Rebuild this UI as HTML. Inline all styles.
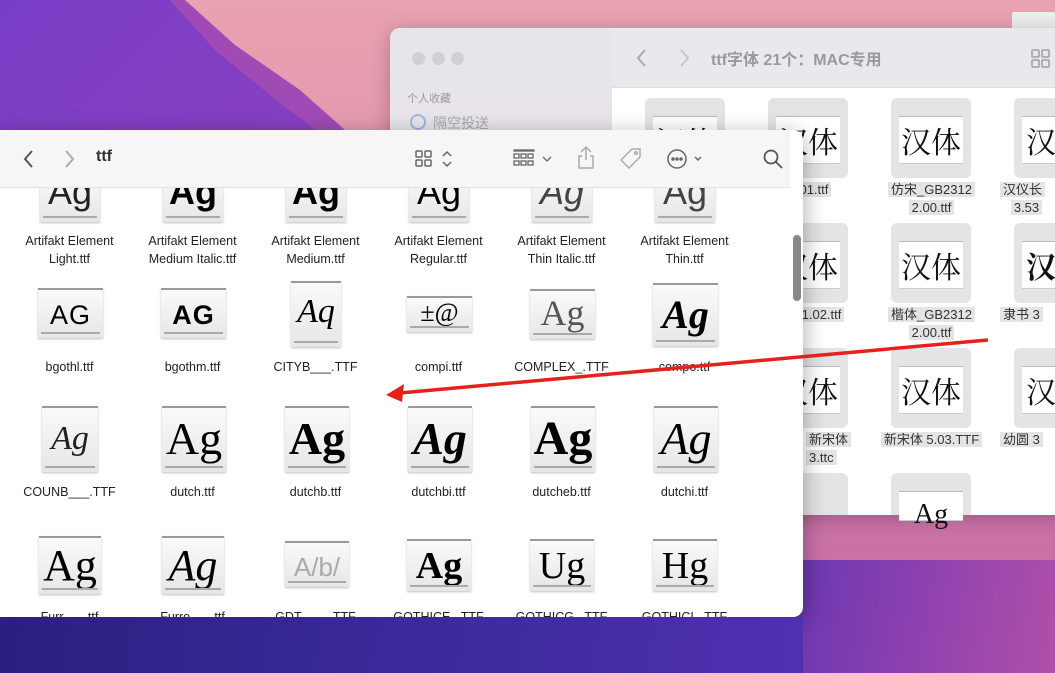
<!DOCTYPE html>
<html><head><meta charset="utf-8"><style>
*{margin:0;padding:0;box-sizing:border-box}
body{width:1055px;height:673px;overflow:hidden;position:relative;font-family:"Liberation Sans","Noto Sans CJK SC",sans-serif;
background:linear-gradient(180deg,#e9a2b2 0%,#e49aae 20%,#d47fa8 60%,#c266a8 100%)}
.a{position:absolute}
.ic{position:absolute;background:linear-gradient(#fafafa,#e6e6e6);border-top:2px solid #999;box-shadow:0 1px 2px rgba(0,0,0,.25);overflow:hidden;text-align:center;color:#000;font-family:"Liberation Serif",serif}
.ic:after{content:"";position:absolute;left:3px;right:3px;bottom:4px;border-top:2px solid #aaa}
.lb{position:absolute;width:123px;text-align:center;font-size:12.5px;line-height:18px;color:#222}
.bt{position:absolute;background:#e4e3e5;border-radius:6px}
.cn{position:absolute;background:#fff;border-top:1px solid #bbb;border-bottom:1px solid #ccc;left:8px;right:8px;top:18px;height:48px;font-family:"Noto Serif CJK SC",serif;font-size:30px;line-height:46px;text-align:center;color:#111}
.bl{position:absolute;width:123px;text-align:center;font-size:13px;line-height:18px;color:#333}
.bl span{background:#e4e3e5;padding:0 3px}
</style></head><body>
<!-- upper-left purple shapes -->
<div class="a" style="left:0;top:0;width:420px;height:130px;background:#a04ab6;clip-path:polygon(0 0,185px 0,235px 45px,300px 90px,345px 130px,0 130px)"></div>
<div class="a" style="left:0;top:0;width:420px;height:130px;background:linear-gradient(135deg,#7a3ec6,#8a40c0);clip-path:polygon(0 0,170px 0,215px 50px,270px 95px,315px 130px,0 130px)"></div>
<!-- desktop lower band -->
<div class="a" style="left:0;top:560px;width:1055px;height:113px;background:linear-gradient(100deg,#2a2080 0%,#3a2a9a 40%,#5030b0 65%,#8a40b0 85%,#b050a8 100%)"></div>
<div class="a" style="left:1012px;top:12px;width:43px;height:18px;background:#eee;border-radius:2px"></div>

<!-- back window -->
<div class="a" style="left:390px;top:28px;width:680px;height:487px;background:#fff;border-radius:10px;overflow:hidden;box-shadow:0 4px 20px rgba(0,0,0,.25)">
 <div class="a" style="left:0;top:0;width:222px;height:487px;background:#e8e5ea"></div>
 <div class="a" style="left:222px;top:0;width:460px;height:60px;background:#ebe8ed;border-bottom:1px solid #ddd"></div>
 <div class="a" style="left:22px;top:24px;width:13px;height:13px;border-radius:50%;background:#d3d0d4"></div>
 <div class="a" style="left:42px;top:24px;width:13px;height:13px;border-radius:50%;background:#d3d0d4"></div>
 <div class="a" style="left:61px;top:24px;width:13px;height:13px;border-radius:50%;background:#d3d0d4"></div>
 <div class="a" style="left:17px;top:62px;font-size:11px;color:#999">个人收藏</div>
 <div class="a" style="left:20px;top:86px;width:16px;height:16px;border-radius:50%;border:2px solid #9bb8e6"></div>
 <div class="a" style="left:43px;top:85px;font-size:14px;color:#aaa">隔空投送</div>
 <svg class="a" style="left:245px;top:20px" width="14" height="20"><path d="M10 2 L3 10 L10 18" fill="none" stroke="#aaa" stroke-width="2"/></svg>
 <svg class="a" style="left:287px;top:20px" width="14" height="20"><path d="M4 2 L11 10 L4 18" fill="none" stroke="#c6c6c6" stroke-width="2"/></svg>
 <div class="a" style="left:321px;top:18px;font-size:16px;color:#999;font-weight:bold">ttf字体 21个：MAC专用</div>
 <svg class="a" style="left:640px;top:20px" width="22" height="22" fill="none" stroke="#aaa" stroke-width="1.8"><rect x="2" y="2" width="7" height="7" rx="1"/><rect x="12" y="2" width="7" height="7" rx="1"/><rect x="2" y="12" width="7" height="7" rx="1"/><rect x="12" y="12" width="7" height="7" rx="1"/></svg>
</div>
<div class="bt" style="left:645px;top:98px;width:80px;height:80px"><div class="cn">汉体</div></div>
<div class="bt" style="left:768px;top:98px;width:80px;height:80px"><div class="cn">汉体</div></div>
<div class="bt" style="left:891px;top:98px;width:80px;height:80px"><div class="cn">汉体</div></div>
<div class="bt" style="left:1014px;top:98px;width:80px;height:80px"><div class="cn" style="text-align:left;padding-left:4px">汉</div></div>
<div class="bl" style="left:747px;top:181px"><span>5.01.ttf</span></div>
<div class="bl" style="left:870px;top:181px"><span>仿宋_GB2312</span><br><span>2.00.ttf</span></div>
<div class="bl" style="left:1000px;top:181px;text-align:left"><span>汉仪长</span><br>&nbsp;&nbsp;&nbsp;<span>3.53</span></div>
<div class="bt" style="left:768px;top:223px;width:80px;height:80px"><div class="cn">汉体</div></div>
<div class="bt" style="left:891px;top:223px;width:80px;height:80px"><div class="cn">汉体</div></div>
<div class="bt" style="left:1014px;top:223px;width:80px;height:80px"><div class="cn" style="text-align:left;padding-left:4px;font-weight:bold">汉</div></div>
<div class="bl" style="left:760px;top:306px"><span>1.02.ttf</span></div>
<div class="bl" style="left:870px;top:306px"><span>楷体_GB2312</span><br><span>2.00.ttf</span></div>
<div class="bl" style="left:1000px;top:306px;text-align:left"><span>隶书 3</span></div>
<div class="bt" style="left:768px;top:348px;width:80px;height:80px"><div class="cn">汉体</div></div>
<div class="bt" style="left:891px;top:348px;width:80px;height:80px"><div class="cn">汉体</div></div>
<div class="bt" style="left:1014px;top:348px;width:80px;height:80px"><div class="cn" style="text-align:left;padding-left:4px">汉</div></div>
<div class="bl" style="left:766px;top:431px;text-align:left;padding-left:40px"><span>新宋体</span><br><span>3.ttc</span></div>
<div class="bl" style="left:870px;top:431px"><span>新宋体 5.03.TTF</span></div>
<div class="bl" style="left:1000px;top:431px;text-align:left"><span>幼圆 3</span></div>
<div class="bt" style="left:768px;top:473px;width:80px;height:42px;border-radius:6px 6px 0 0"></div>
<div class="bt" style="left:891px;top:473px;width:80px;height:42px;border-radius:6px 6px 0 0"><div class="cn" style="height:30px;font-family:'Liberation Serif';font-size:28px">Ag</div></div>

<!-- front window -->
<div class="a" style="left:0;top:130px;width:803px;height:487px;background:#fff;border-radius:0 10px 10px 0;overflow:hidden;box-shadow:0 6px 24px rgba(0,0,0,.35)">
 <div class="a" style="left:793px;top:105px;width:8px;height:66px;border-radius:4px;background:#888"></div>
</div>

<div class="ic" style="left:40px;top:170px;width:60px;height:52px;font-family:'Liberation Sans';font-size:36px;font-weight:300;line-height:40px;color:#222">Ag</div>
<div class="ic" style="left:163px;top:170px;width:60px;height:52px;font-family:'Liberation Sans';font-size:36px;font-weight:bold;line-height:40px">Ag</div>
<div class="ic" style="left:286px;top:170px;width:60px;height:52px;font-family:'Liberation Sans';font-size:36px;font-weight:bold;line-height:40px">Ag</div>
<div class="ic" style="left:409px;top:170px;width:60px;height:52px;font-family:'Liberation Sans';font-size:36px;line-height:40px">Ag</div>
<div class="ic" style="left:532px;top:170px;width:60px;height:52px;font-family:'Liberation Sans';font-size:36px;font-style:italic;line-height:40px;color:#444">Ag</div>
<div class="ic" style="left:655px;top:170px;width:60px;height:52px;font-family:'Liberation Sans';font-size:36px;line-height:40px;color:#444">Ag</div>
<div class="a" style="left:0;top:130px;width:790px;height:58px;background:#f6f6f6;border-bottom:1px solid #e2e2e2"></div>
<div class="a" style="left:0;top:130px;width:790px;height:58px">
  <svg class="a" style="left:22px;top:19px" width="14" height="20"><path d="M10 2 L3 10 L10 18" fill="none" stroke="#555" stroke-width="2"/></svg>
  <svg class="a" style="left:62px;top:19px" width="14" height="20"><path d="M4 2 L11 10 L4 18" fill="none" stroke="#aaa" stroke-width="2"/></svg>
  <div class="a" style="left:96px;top:18px;font-size:16px;font-weight:bold;color:#333">ttf</div>
  <svg class="a" style="left:414px;top:19px" width="42" height="20" fill="none" stroke="#666" stroke-width="1.5"><rect x="2" y="2" width="6" height="6" rx="1"/><rect x="11" y="2" width="6" height="6" rx="1"/><rect x="2" y="11" width="6" height="6" rx="1"/><rect x="11" y="11" width="6" height="6" rx="1"/><path d="M29 7 L33 3 L37 7 M29 13 L33 17 L37 13"/></svg>
  <svg class="a" style="left:512px;top:19px" width="44" height="20" fill="none" stroke="#666" stroke-width="1.3"><rect x="2" y="1" width="20" height="1"/><rect x="2" y="5" width="5" height="4"/><rect x="9" y="5" width="5" height="4"/><rect x="16" y="5" width="5" height="4"/><rect x="2" y="12" width="5" height="4"/><rect x="9" y="12" width="5" height="4"/><rect x="16" y="12" width="5" height="4"/><path d="M31 8 L35 12 L39 8"/></svg>
  <svg class="a" style="left:576px;top:15px" width="20" height="26" fill="none" stroke="#aaa" stroke-width="1.5"><path d="M10 2 V15 M5 7 L10 2 L15 7 M6 11 H3 V23 H17 V11 H14"/></svg>
  <svg class="a" style="left:618px;top:16px" width="26" height="26" fill="none" stroke="#aaa" stroke-width="1.5"><path d="M14 3 H22 V11 L11 22 L3 14 Z"/><circle cx="18" cy="7" r="1.3"/></svg>
  <svg class="a" style="left:666px;top:17px" width="42" height="24" fill="none" stroke="#666" stroke-width="1.5"><circle cx="11" cy="12" r="9"/><circle cx="7" cy="12" r="1" fill="#666"/><circle cx="11" cy="12" r="1" fill="#666"/><circle cx="15" cy="12" r="1" fill="#666"/><path d="M29 10 L32 13 L35 10"/></svg>
  <svg class="a" style="left:762px;top:18px" width="22" height="22" fill="none" stroke="#555" stroke-width="1.8"><circle cx="9" cy="9" r="6.5"/><path d="M14 14 L20 20"/></svg>
</div>
<div class="lb" style="left:8px;top:232px">Artifakt Element<br>Light.ttf</div>
<div class="lb" style="left:131px;top:232px">Artifakt Element<br>Medium Italic.ttf</div>
<div class="lb" style="left:254px;top:232px">Artifakt Element<br>Medium.ttf</div>
<div class="lb" style="left:377px;top:232px">Artifakt Element<br>Regular.ttf</div>
<div class="lb" style="left:500px;top:232px">Artifakt Element<br>Thin Italic.ttf</div>
<div class="lb" style="left:623px;top:232px">Artifakt Element<br>Thin.ttf</div>

<div class="ic" style="left:38px;top:288px;width:65px;height:50px;font-family:'Liberation Sans';font-size:27px;line-height:50px;letter-spacing:1px">AG</div>
<div class="ic" style="left:161px;top:288px;width:65px;height:50px;font-family:'Liberation Sans';font-size:27px;font-weight:bold;line-height:50px;letter-spacing:1px">AG</div>
<div class="ic" style="left:291px;top:281px;width:50px;height:66px;font-size:34px;font-style:italic;line-height:58px;font-weight:100">Aq</div>
<div class="ic" style="left:407px;top:296px;width:65px;height:36px;font-size:26px;line-height:30px">±@</div>
<div class="ic" style="left:530px;top:289px;width:65px;height:50px;font-size:36px;line-height:44px;color:#555">Ag</div>
<div class="ic" style="left:653px;top:283px;width:65px;height:63px;font-size:40px;font-style:italic;font-weight:bold;line-height:60px">Ag</div>
<div class="lb" style="left:8px;top:358px">bgothl.ttf</div>
<div class="lb" style="left:131px;top:358px">bgothm.ttf</div>
<div class="lb" style="left:254px;top:358px">CITYB___.TTF</div>
<div class="lb" style="left:377px;top:358px">compi.ttf</div>
<div class="lb" style="left:500px;top:358px">COMPLEX_.TTF</div>
<div class="lb" style="left:623px;top:358px">compo.ttf</div>

<div class="ic" style="left:42px;top:406px;width:56px;height:66px;font-size:34px;font-style:italic;line-height:62px;color:#222">Ag</div>
<div class="ic" style="left:162px;top:406px;width:64px;height:66px;font-size:46px;line-height:62px">Ag</div>
<div class="ic" style="left:285px;top:406px;width:64px;height:66px;font-size:46px;font-weight:bold;line-height:62px">Ag</div>
<div class="ic" style="left:408px;top:406px;width:64px;height:66px;font-size:46px;font-weight:bold;font-style:italic;line-height:62px">Ag</div>
<div class="ic" style="left:531px;top:406px;width:64px;height:66px;font-size:48px;font-weight:900;line-height:62px">Ag</div>
<div class="ic" style="left:654px;top:406px;width:64px;height:66px;font-size:46px;font-style:italic;line-height:62px">Ag</div>
<div class="lb" style="left:8px;top:483px">COUNB___.TTF</div>
<div class="lb" style="left:131px;top:483px">dutch.ttf</div>
<div class="lb" style="left:254px;top:483px">dutchb.ttf</div>
<div class="lb" style="left:377px;top:483px">dutchbi.ttf</div>
<div class="lb" style="left:500px;top:483px">dutcheb.ttf</div>
<div class="lb" style="left:623px;top:483px">dutchi.ttf</div>

<div class="ic" style="left:39px;top:536px;width:62px;height:58px;font-size:44px;line-height:56px">Ag</div>
<div class="ic" style="left:162px;top:536px;width:62px;height:58px;font-size:44px;font-style:italic;line-height:56px">Ag</div>
<div class="ic" style="left:285px;top:541px;width:64px;height:46px;font-family:'Liberation Sans';font-size:26px;font-weight:100;line-height:48px;color:#aaa">A/b/</div>
<div class="ic" style="left:407px;top:539px;width:64px;height:52px;font-size:38px;font-weight:bold;line-height:50px">Ag</div>
<div class="ic" style="left:530px;top:539px;width:64px;height:52px;font-size:38px;line-height:50px">Ug</div>
<div class="ic" style="left:653px;top:539px;width:64px;height:52px;font-size:38px;line-height:50px">Hg</div>
<div class="lb" style="left:8px;top:608px">Furr___.ttf</div>
<div class="lb" style="left:131px;top:608px">Furro___.ttf</div>
<div class="lb" style="left:254px;top:608px">GDT____.TTF</div>
<div class="lb" style="left:377px;top:608px">GOTHICE_.TTF</div>
<div class="lb" style="left:500px;top:608px">GOTHICG_.TTF</div>
<div class="lb" style="left:623px;top:608px">GOTHICI_.TTF</div>
<div class="a" style="left:0;top:617px;width:803px;height:56px;background:linear-gradient(100deg,#2a2080 0%,#3a2a9a 50%,#5030b0 100%)"></div>

<svg class="a" style="left:0;top:0" width="1055" height="673"><line x1="988" y1="340" x2="400" y2="393" stroke="#e8201c" stroke-width="3.5"/><path d="M386 395 L404 384 L402 402 Z" fill="#e8201c"/></svg>
</body></html>
